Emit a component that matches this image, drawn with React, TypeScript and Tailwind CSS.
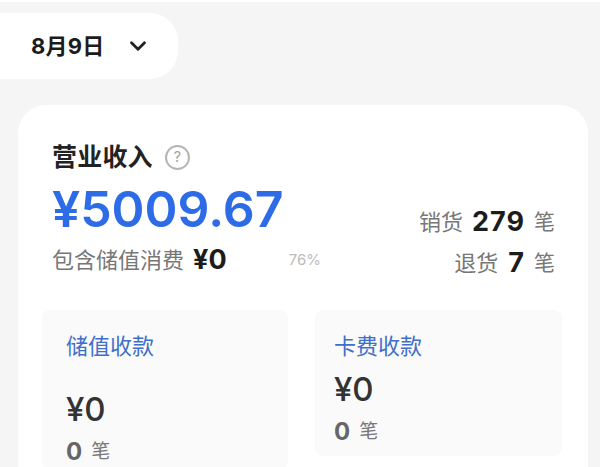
import { ChevronDown } from "lucide-react";

const font = "[font-family:'Inter','Noto_Sans_CJK_SC',sans-serif]";

function SubCard({ title, className, gap }: { title: string; className: string; gap: string }) {
    return (
        <div className={`${className} bg-[#fafafa] rounded-lg pt-[21px]`}>
            <p className="text-[22px] leading-[30px] text-[#3f6fc9]">{title}</p>
            <p className={`${gap} text-[33px] leading-[36px] font-medium text-[#333]`}>¥0</p>
            <p className="mt-[10px] flex items-center gap-[9px] leading-[30px]">
                <span className="text-[24px] font-bold text-[#666]">0</span>
                <span className="text-[19px] text-[#777]">笔</span>
            </p>
        </div>
    );
}

export default function App() {
    return (
        <div className={`${font} h-[467px] w-[600px] overflow-hidden bg-[#f5f5f5]`}>
            <div className="h-[2px] bg-white" />

            {/* Date picker */}
            <div className="mt-[11px] flex h-[66px] w-[178px] items-center rounded-r-[28px] bg-white pl-[31px]">
                <span className="text-[22px] font-bold tracking-[0.2px] text-[#1c1c1c]">8月9日</span>
                <ChevronDown size={26} strokeWidth={2.6} className="ml-[21px] text-[#222]" />
            </div>

            {/* Revenue card */}
            <div className="ml-[18px] mt-[26px] h-[400px] w-[570px] rounded-[28px] bg-white px-[24px] pt-[34px]">
                <div className="flex items-center pl-[10px]">
                    <h1 className="text-[25px] leading-[36px] font-bold tracking-[0.2px] text-[#222]">营业收入</h1>
                    <span className="ml-[12px] flex h-[25px] w-[25px] items-center justify-center rounded-full border-2 border-[#b5b5b5] text-[15px] text-[#a5a5a5]">
                        ?
                    </span>
                </div>

                <div className="mt-[5px] flex items-start justify-between pl-[10px] pr-[9px]">
                    <div>
                        <p className="text-[50px] leading-[58px] font-semibold text-[#2e6be6]">¥5009.67</p>
                        <p className="mt-[6px] flex items-center gap-[9px] leading-[32px]">
                            <span className="text-[22px] text-[#777]">包含储值消费</span>
                            <span className="text-[27px] font-bold text-[#1c1c1c]">¥0</span>
                            <span className="ml-[53px] text-[15px] text-[#bbb]">76%</span>
                        </p>
                    </div>
                    <div className="mt-[26px] flex flex-col items-end gap-[9px]">
                        <p className="flex items-center gap-[9px] leading-[32px]">
                            <span className="text-[22px] text-[#777]">销货</span>
                            <span className="text-[27px] font-bold tracking-[1px] text-[#1c1c1c]">279</span>
                            <span className="text-[21px] text-[#777]">笔</span>
                        </p>
                        <p className="flex items-center gap-[10px] leading-[32px]">
                            <span className="text-[22px] text-[#777]">退货</span>
                            <span className="text-[27px] font-bold text-[#1c1c1c]">7</span>
                            <span className="text-[21px] text-[#777]">笔</span>
                        </p>
                    </div>
                </div>

                <div className="mt-[31px] flex items-start gap-[27px]">
                    <SubCard title="储值收款" className="h-[160px] w-[246px] pl-[24px]" gap="mt-[30px]" />
                    <SubCard title="卡费收款" className="h-[146px] w-[247px] pl-[19px]" gap="mt-[10px]" />
                </div>
            </div>
        </div>
    );
}
